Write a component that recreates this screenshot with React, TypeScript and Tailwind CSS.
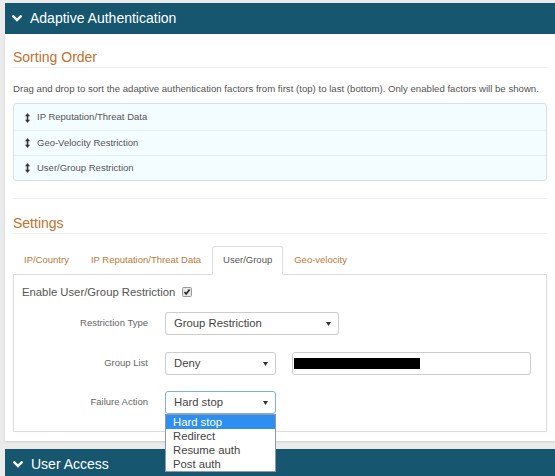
import React from "react";

function Chevron() {
  return (
    <svg width="10" height="7" viewBox="0 0 10 7" className="shrink-0">
      <polyline points="1.3,1.3 5,5 8.7,1.3" fill="none" stroke="#fff" strokeWidth="2.4" strokeLinecap="square" />
    </svg>
  );
}

function ResizeIcon() {
  return (
    <svg width="5" height="10" viewBox="0 0 5 10" className="shrink-0">
      <polygon points="0,3.2 2.5,0 5,3.2" fill="#333" />
      <rect x="1.7" y="3" width="1.6" height="4" fill="#333" />
      <polygon points="0,6.8 2.5,10 5,6.8" fill="#333" />
    </svg>
  );
}

function Arrow() {
  return (
    <svg width="5" height="4" viewBox="0 0 5 4" className="shrink-0">
      <polygon points="0,0 5,0 2.5,4" fill="#333" />
    </svg>
  );
}

function Select({ value, w, focused }: { value: string; w: string; focused?: boolean }) {
  return (
    <div
      className={`${w} h-[23px] flex items-center justify-between pl-[8px] pr-[7px] rounded-[3px] bg-white text-[11.3px] text-[#444] border ${
        focused ? "border-[#7fb0e0]" : "border-[#ccc]"
      }`}
    >
      <span>{value}</span>
      <Arrow />
    </div>
  );
}

function Label({ children }: { children: React.ReactNode }) {
  return <div className="w-[134px] text-right text-[9.5px] text-[#666]">{children}</div>;
}

export default function App() {
  const tabs = ["IP/Country", "IP Reputation/Threat Data", "User/Group", "Geo-velocity"];
  return (
    <div className="w-[555px] h-[476px] overflow-hidden bg-[#ebebeb] pt-[3px] pl-[5px] font-['Liberation_Sans',Arial,sans-serif]">
      <div className="h-[31px] bg-[#17566f] flex items-center pl-[7px] text-white text-[14px]">
        <Chevron />
        <span className="ml-[8px]">Adaptive Authentication</span>
      </div>
      <div className="bg-white px-[8px] pt-[14px] pb-[9px] shadow-[0_1px_2px_rgba(0,0,0,0.12)]">
        <div className="h-[20px] leading-[19px] text-[14px] text-[#c0722f] border-b border-[#eee]">Sorting Order</div>
        <div className="mt-[15px] leading-[12px] text-[9.65px] text-[#555] whitespace-nowrap">
          Drag and drop to sort the adaptive authentication factors from first (top) to last (bottom). Only enabled factors will be shown.
        </div>
        <div className="mt-[8px] border border-[#d5e2e6] rounded-[3px] bg-[#f3fcfe] pt-px">
          {["IP Reputation/Threat Data", "Geo-Velocity Restriction", "User/Group Restriction"].map((t, i) => (
            <div
              key={t}
              className={`h-[25px] flex items-center pl-[11px] text-[9.5px] text-[#555] ${i > 0 ? "border-t border-[#e2f0f4]" : ""}`}
            >
              <ResizeIcon />
              <span className="ml-[7px]">{t}</span>
            </div>
          ))}
        </div>
        <div className="mt-[17px] border-t border-[#eee]" />
        <div className="mt-[15px] h-[20px] leading-[19px] text-[14px] text-[#c0722f] border-b border-[#eee]">Settings</div>
        <div className="mt-[12px] flex h-[29px] border-b border-[#ddd]">
          {tabs.map((t) => {
            const active = t === "User/Group";
            return (
              <div
                key={t}
                className={`h-[29px] flex items-center px-[10px] rounded-t-[3px] border text-[9.5px] ${
                  active ? "border-[#ddd] border-b-white bg-white text-[#555]" : "border-transparent text-[#c0783a]"
                }`}
              >
                {t}
              </div>
            );
          })}
        </div>
        <div className="h-[157px] border border-t-0 border-[#ddd] pt-[10px]">
          <div className="flex items-center pl-[8px] h-[14px] text-[11.3px] text-[#555]">
            <span>Enable User/Group Restriction</span>
            <svg width="10" height="10" viewBox="0 0 10 10" className="ml-[7px]">
              <rect x="0.5" y="0.5" width="9" height="9" rx="1" fill="#e6e6e6" stroke="#999" />
              <polyline points="2.5,5 4.2,7 7.6,2.6" fill="none" stroke="#222" strokeWidth="1.6" />
            </svg>
          </div>
          <div className="mt-[13px] flex items-center">
            <Label>Restriction Type</Label>
            <div className="ml-[17px]">
              <Select value="Group Restriction" w="w-[174px]" />
            </div>
          </div>
          <div className="mt-[17px] flex items-center">
            <Label>Group List</Label>
            <div className="ml-[17px]">
              <Select value="Deny" w="w-[111px]" />
            </div>
            <div className="ml-[16px] w-[239px] h-[23px] border border-[#ccc] rounded-[3px] bg-white flex items-center pl-px">
              <div className="w-[126px] h-[11px] bg-black" />
            </div>
          </div>
          <div className="mt-[16px] flex items-center">
            <Label>Failure Action</Label>
            <div className="ml-[17px] relative">
              <Select value="Hard stop" w="w-[111px]" focused />
              <div className="absolute left-0 top-full z-10 w-[111px] bg-white border border-[#8a9bb0] text-[11.3px] text-[#444] leading-[14px]">
                <div className="pl-[7px] bg-[#2e8ff0] text-white">Hard stop</div>
                <div className="pl-[7px]">Redirect</div>
                <div className="pl-[7px]">Resume auth</div>
                <div className="pl-[7px]">Post auth</div>
              </div>
            </div>
          </div>
        </div>
      </div>
      <div className="mt-[8px] h-[31px] bg-[#17566f] flex items-center pl-[8px] text-white text-[14px]">
        <Chevron />
        <span className="ml-[8px]">User Access</span>
      </div>
    </div>
  );
}
